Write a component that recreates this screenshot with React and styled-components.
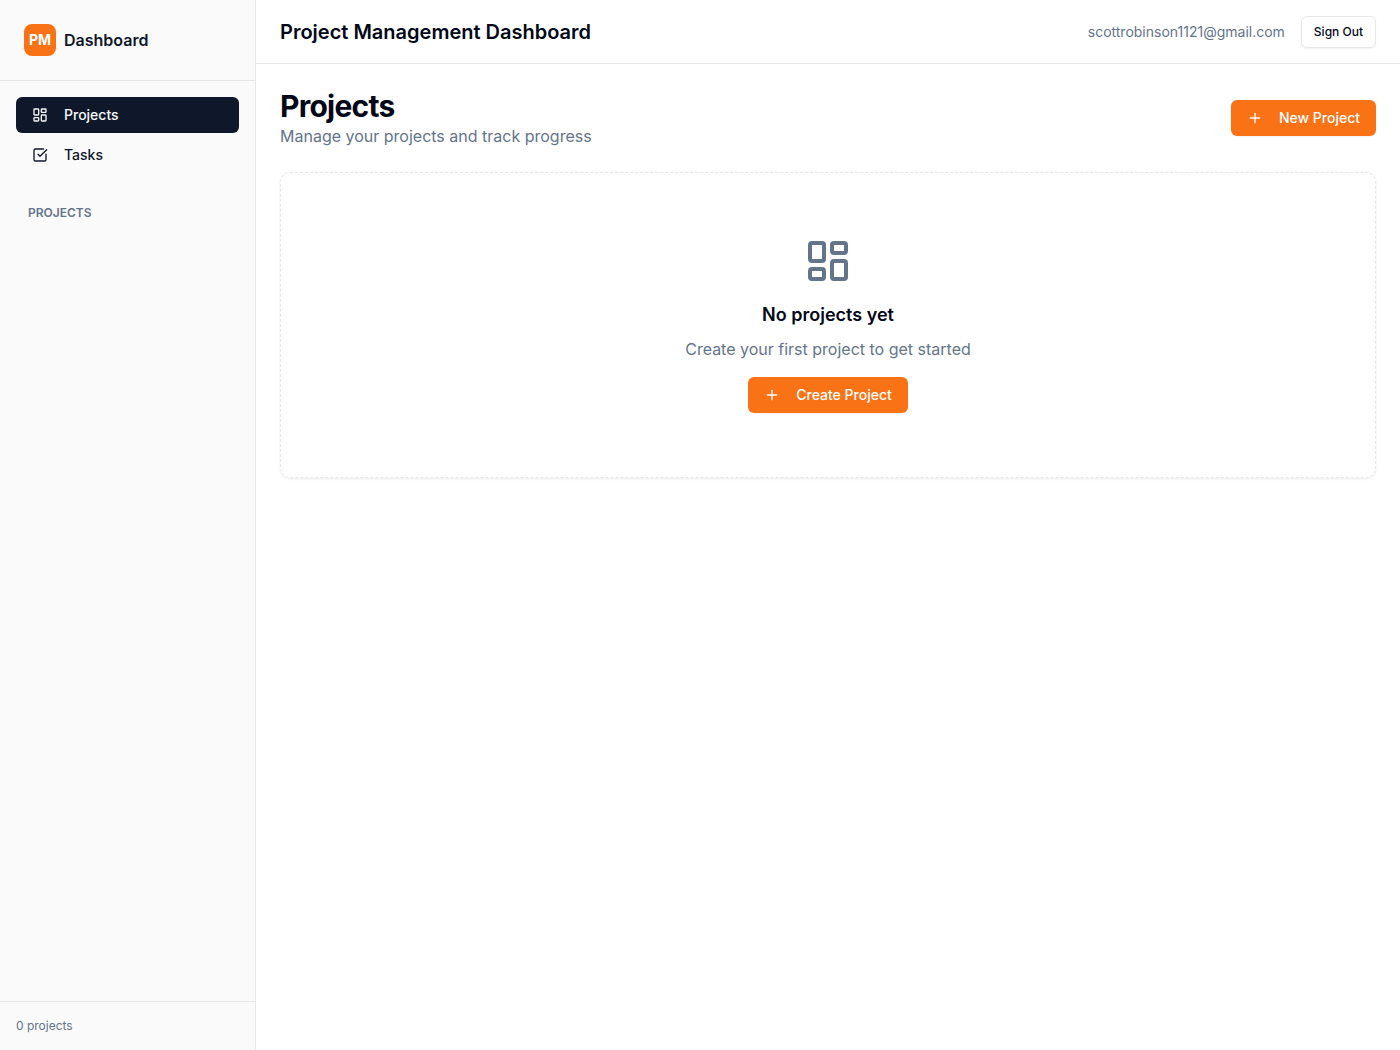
import React from 'react';
import styled, { createGlobalStyle } from 'styled-components';
import { LayoutDashboard, SquareCheckBig, Plus } from 'lucide-react';

const COLORS = {
  ink: '#020817',
  navy: '#0f172a',
  muted: '#64748b',
  border: '#e5e7eb',
  orange: '#f97316',
  sidebar: '#fafafa',
  navText: '#f8fafc',
};

const GlobalStyle = createGlobalStyle`
  * { box-sizing: border-box; }
  html, body { margin: 0; padding: 0; background: #fff; }
  body {
    font-family: Inter, 'Liberation Sans', sans-serif;
    color: ${COLORS.ink};
    -webkit-font-smoothing: antialiased;
  }
`;

const Shell = styled.div`
  display: flex;
  height: 1050px;
  overflow: hidden;
`;

const Sidebar = styled.aside`
  width: 256px;
  flex: none;
  display: flex;
  flex-direction: column;
  background: ${COLORS.sidebar};
  border-right: 1px solid ${COLORS.border};
`;

const Brand = styled.div`
  height: 81px;
  display: flex;
  align-items: center;
  gap: 8px;
  padding: 0 24px;
  border-bottom: 1px solid ${COLORS.border};
`;

const Logo = styled.div`
  width: 32px;
  height: 32px;
  border-radius: 8px;
  background: ${COLORS.orange};
  color: #fff;
  display: flex;
  align-items: center;
  justify-content: center;
  font-size: 14px;
  line-height: 20px;
  font-weight: 700;
`;

const BrandName = styled.span`
  font-size: 16px;
  line-height: 24px;
  font-weight: 600;
  color: ${COLORS.navy};
`;

const Nav = styled.nav`
  flex: 1;
  display: flex;
  flex-direction: column;
  gap: 4px;
  padding: 16px;
`;

const NavItem = styled.a`
  height: 36px;
  display: flex;
  align-items: center;
  gap: 16px;
  padding: 0 16px;
  border-radius: 6px;
  font-size: 14px;
  line-height: 20px;
  font-weight: 500;
  background: ${p => (p.$active ? COLORS.navy : 'transparent')};
  color: ${p => (p.$active ? COLORS.navText : COLORS.navy)};
`;

const SectionLabel = styled.div`
  margin-top: 28px;
  padding: 0 12px;
  font-size: 12px;
  line-height: 16px;
  font-weight: 600;
  color: ${COLORS.muted};
`;

const SidebarFooter = styled.div`
  height: 49px;
  display: flex;
  align-items: center;
  padding: 0 16px;
  border-top: 1px solid ${COLORS.border};
  font-size: 12px;
  line-height: 16px;
  color: ${COLORS.muted};
`;

const Content = styled.div`
  flex: 1;
  min-width: 0;
  display: flex;
  flex-direction: column;
`;

const TopBar = styled.header`
  height: 64px;
  flex: none;
  display: flex;
  align-items: center;
  justify-content: space-between;
  padding: 0 24px;
  border-bottom: 1px solid ${COLORS.border};
`;

const TopTitle = styled.h1`
  margin: 0;
  font-size: 20px;
  line-height: 28px;
  font-weight: 600;
`;

const Account = styled.div`
  display: flex;
  align-items: center;
  gap: 16px;
`;

const Email = styled.span`
  font-size: 14px;
  line-height: 20px;
  color: ${COLORS.muted};
`;

const SignOut = styled.button`
  height: 32px;
  padding: 0 12px;
  border: 1px solid ${COLORS.border};
  border-radius: 6px;
  background: #fff;
  box-shadow: 0 1px 2px rgba(0, 0, 0, 0.05);
  font: 500 12px/16px Inter, 'Liberation Sans', sans-serif;
  color: ${COLORS.ink};
`;

const Main = styled.main`
  flex: 1;
  display: flex;
  flex-direction: column;
  gap: 24px;
  padding: 24px;
`;

const PageHead = styled.div`
  display: flex;
  align-items: center;
  justify-content: space-between;
`;

const PageTitle = styled.h2`
  margin: 0;
  font-size: 30px;
  line-height: 36px;
  font-weight: 700;
  letter-spacing: -0.75px;
`;

const PageSub = styled.p`
  margin: 0;
  font-size: 16px;
  line-height: 24px;
  color: ${COLORS.muted};
`;

const PrimaryButton = styled.button`
  height: 36px;
  display: inline-flex;
  align-items: center;
  gap: 16px;
  padding: 0 16px;
  border: 0;
  border-radius: 6px;
  background: ${COLORS.orange};
  box-shadow: 0 1px 2px rgba(0, 0, 0, 0.05);
  color: #fff;
  font: 500 14px/20px Inter, 'Liberation Sans', sans-serif;
`;

const EmptyCard = styled.section`
  height: 306px;
  display: flex;
  flex-direction: column;
  align-items: center;
  padding-top: 64px;
  border: 1px dashed ${COLORS.border};
  border-radius: 10px;
  box-shadow: 0 1px 3px rgba(0, 0, 0, 0.08);
  color: ${COLORS.muted};
`;

const EmptyTitle = styled.h3`
  margin: 16px 0 0;
  font-size: 18px;
  line-height: 28px;
  font-weight: 600;
  color: ${COLORS.ink};
`;

const EmptyText = styled.p`
  margin: 8px 0 16px;
  font-size: 16px;
  line-height: 24px;
  color: ${COLORS.muted};
`;

export default function App() {
  return (
    <Shell>
      <GlobalStyle />
      <Sidebar>
        <Brand>
          <Logo>PM</Logo>
          <BrandName>Dashboard</BrandName>
        </Brand>
        <Nav>
          <NavItem $active>
            <LayoutDashboard size={16} />
            Projects
          </NavItem>
          <NavItem>
            <SquareCheckBig size={16} />
            Tasks
          </NavItem>
          <SectionLabel>PROJECTS</SectionLabel>
        </Nav>
        <SidebarFooter>0 projects</SidebarFooter>
      </Sidebar>
      <Content>
        <TopBar>
          <TopTitle>Project Management Dashboard</TopTitle>
          <Account>
            <Email>scottrobinson1121@gmail.com</Email>
            <SignOut>Sign Out</SignOut>
          </Account>
        </TopBar>
        <Main>
          <PageHead>
            <div>
              <PageTitle>Projects</PageTitle>
              <PageSub>Manage your projects and track progress</PageSub>
            </div>
            <PrimaryButton>
              <Plus size={16} />
              New Project
            </PrimaryButton>
          </PageHead>
          <EmptyCard>
            <LayoutDashboard size={48} />
            <EmptyTitle>No projects yet</EmptyTitle>
            <EmptyText>Create your first project to get started</EmptyText>
            <PrimaryButton>
              <Plus size={16} />
              Create Project
            </PrimaryButton>
          </EmptyCard>
        </Main>
      </Content>
    </Shell>
  );
}
